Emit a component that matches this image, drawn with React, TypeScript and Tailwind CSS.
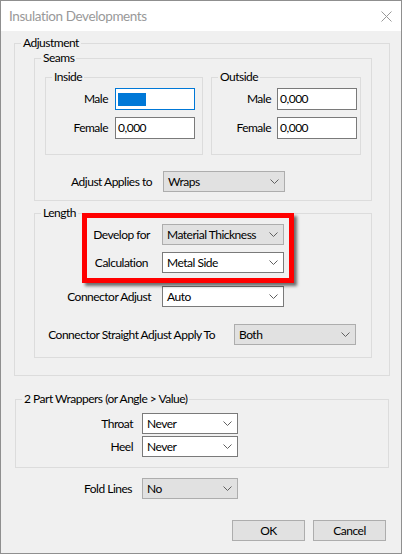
import React from "react";

interface GroupBoxProps {
	label: string;
	className: string;
	children?: React.ReactNode;
}

const GroupBox: React.FC<GroupBoxProps> = ({ label, className, children }) => (
	<div className={`relative border border-[#dcdcdc] ${className}`}>
		<span className="absolute -top-[9px] left-[6px] whitespace-nowrap bg-[#f0f0f0] px-[2px] leading-[16px]">
			{label}
		</span>
		{children}
	</div>
);

const Chevron = () => (
	<svg width="9" height="5" viewBox="0 0 9 5" className="mr-[5px] shrink-0">
		<path d="M0.5 0.5 L4.5 4.5 L8.5 0.5" fill="none" stroke="#606060" strokeWidth="1" />
	</svg>
);

interface ComboProps {
	value: string;
	gray?: boolean;
	className: string;
}

const Combo: React.FC<ComboProps> = ({ value, gray = false, className }) => (
	<div
		className={`flex h-[21px] shrink-0 items-center justify-between border ${
			gray ? "border-[#adadad] bg-[#e1e1e1]" : "border-[#7a7a7a] bg-white"
		} ${className}`}
	>
		<span className="whitespace-nowrap pl-[4px] leading-none">{value}</span>
		<Chevron />
	</div>
);

const TextBox: React.FC<{ value?: string; focused?: boolean }> = ({ value, focused = false }) => (
	<div
		className={`flex h-[22px] w-[80px] items-center border bg-white ${
			focused ? "border-[#0078d7]" : "border-[#7a7a7a]"
		}`}
	>
		{focused ? (
			<div className="ml-[2px] h-[13px] w-[28px] bg-[#0078d7]" />
		) : (
			<span className="pl-[2px] leading-none">{value}</span>
		)}
	</div>
);

const Label: React.FC<{ text: string; className: string }> = ({ text, className }) => (
	<span className={`flex shrink-0 justify-end whitespace-nowrap ${className}`}>{text}</span>
);

export default function App() {
	return (
		<div className="h-[554px] w-[403px] bg-white font-['Lato',sans-serif] text-[12px] tracking-[-0.5px] text-black">
			<div className="flex h-[554px] w-[402px] flex-col border border-[#8f8f8f] bg-[#f0f0f0]">
				{/* title bar */}
				<div className="flex h-[30px] shrink-0 items-center justify-between bg-white pl-[8px] pr-[9px]">
					<span className="text-[13.5px] tracking-[-0.4px] text-[#999999]">Insulation Developments</span>
					<svg width="11" height="11" viewBox="0 0 11 11">
						<path d="M0.5 0.5 L10.5 10.5 M10.5 0.5 L0.5 10.5" stroke="#999999" strokeWidth="1" />
					</svg>
				</div>

				{/* Adjustment */}
				<GroupBox label="Adjustment" className="ml-[13px] mt-[12px] h-[333px] w-[376px]">
					<GroupBox label="Seams" className="ml-[19px] mt-[14px] h-[143px] w-[338px]">
						<div className="ml-[10px] mt-[18px] flex gap-[8px]">
							<GroupBox label="Inside" className="h-[78px] w-[158px]">
								<div className="mt-[10px] grid grid-cols-[62px_80px] items-center gap-x-[7px] gap-y-[7px]">
									<Label text="Male" className="" />
									<TextBox focused />
									<Label text="Female" className="" />
									<TextBox value="0,000" />
								</div>
							</GroupBox>
							<GroupBox label="Outside" className="h-[78px] w-[150px]">
								<div className="mt-[10px] grid grid-cols-[59px_80px] items-center gap-x-[6px] gap-y-[7px]">
									<Label text="Male" className="" />
									<TextBox value="0,000" />
									<Label text="Female" className="" />
									<TextBox value="0,000" />
								</div>
							</GroupBox>
						</div>
						<div className="mt-[16px] flex items-center">
							<Label text="Adjust Applies to" className="w-[117px]" />
							<Combo value="Wraps" gray className="ml-[11px] w-[122px]" />
						</div>
					</GroupBox>

					<GroupBox label="Length" className="ml-[19px] mt-[12px] h-[145px] w-[338px]">
						<div className="mt-[10px] flex flex-col">
							<div className="flex items-center">
								<Label text="Develop for" className="w-[115px]" />
								<Combo value="Material Thickness" gray className="ml-[12px] w-[122px]" />
							</div>
							<div className="mt-[7px] flex items-center">
								<Label text="Calculation" className="w-[113px]" />
								<Combo value="Metal Side" className="ml-[14px] w-[122px]" />
							</div>
							<div className="mt-[13px] flex items-center">
								<Label text="Connector Adjust" className="w-[116px]" />
								<Combo value="Auto" className="ml-[11px] w-[122px]" />
							</div>
							<div className="mt-[17px] flex items-center">
								<Label text="Connector Straight Adjust Apply To" className="w-[180px]" />
								<Combo value="Both" gray className="ml-[19px] w-[122px]" />
							</div>
						</div>
						{/* annotation */}
						<div className="absolute left-[47px] -top-[1px] h-[70px] w-[212px] border-[5px] border-[#ff0000] shadow-[3px_3px_3px_rgba(0,0,0,0.55)]" />
					</GroupBox>
				</GroupBox>

				{/* 2 Part Wrappers */}
				<GroupBox label="2 Part Wrappers (or Angle > Value)" className="ml-[14px] mt-[23px] h-[69px] w-[374px]">
					<div className="mt-[13px] grid grid-cols-[117px_96px] items-center gap-x-[9px] gap-y-[2px]">
						<Label text="Throat" className="" />
						<Combo value="Never" className="w-[96px]" />
						<Label text="Heel" className="" />
						<Combo value="Never" className="w-[96px]" />
					</div>
				</GroupBox>

				<div className="mt-[10px] flex items-center">
					<Label text="Fold Lines" className="w-[131px]" />
					<Combo value="No" gray className="ml-[10px] w-[96px]" />
				</div>

				<div className="mt-[21px] flex justify-end gap-[8px] pr-[15px]">
					<button className="h-[21px] w-[73px] border border-[#adadad] bg-[#e1e1e1] leading-none">OK</button>
					<button className="h-[21px] w-[73px] border border-[#adadad] bg-[#e1e1e1] leading-none">Cancel</button>
				</div>
			</div>
		</div>
	);
}
